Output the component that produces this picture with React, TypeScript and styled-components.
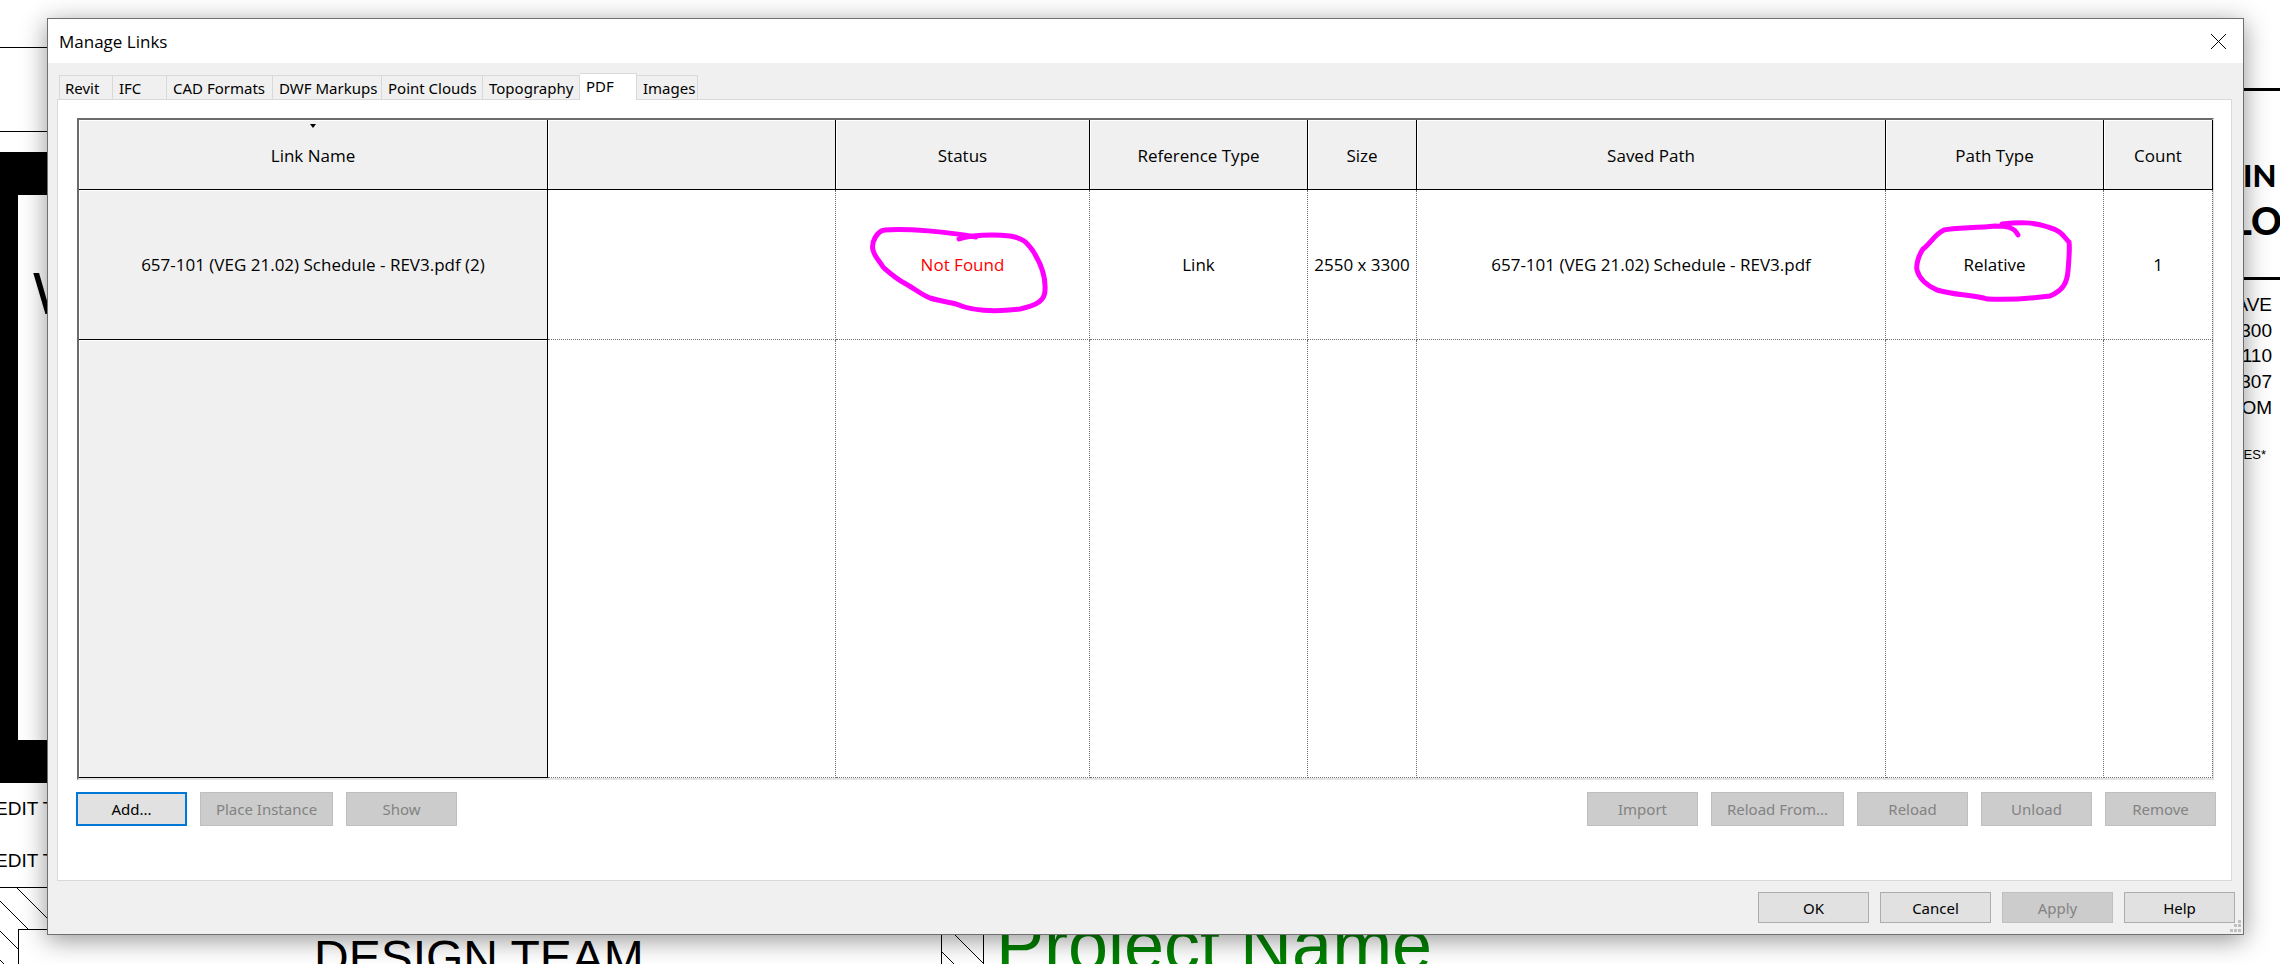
import React from 'react';
import styled, { createGlobalStyle, css } from 'styled-components';

const GlobalStyle = createGlobalStyle`
  * { box-sizing: border-box; }
  body { margin: 0; background: #fff; overflow: hidden; }
`;

const uiFont = '"Open Sans", "Noto Sans", sans-serif';
const controlFont = '"Noto Sans", sans-serif';

const Page = styled.div`
  position: relative;
  display: flex;
  min-height: 100vh;
  padding: 18px 36px 29px 47px;
  overflow: hidden;
`;

const SheetDrawing = styled.svg<{ $side: 'left' | 'right' }>`
  position: absolute;
  top: 0;
  ${(p) => (p.$side === 'left' ? 'left: 0;' : 'right: 0;')}
  font-family: "Liberation Sans", Arial, sans-serif;
`;

const Dialog = styled.main`
  position: relative;
  flex: 1;
  min-width: 0;
  display: flex;
  flex-direction: column;
  background: #f0f0f0;
  border: 1px solid #6f6f6f;
  box-shadow: 0 5px 24px rgba(0, 0, 0, 0.42);
`;

const TitleBar = styled.header`
  display: flex;
  align-items: center;
  justify-content: space-between;
  height: 44px;
  padding: 0 16px 0 11px;
  background: #fff;
`;

const Title = styled.h1`
  margin: 0;
  padding-top: 2px;
  font: 400 17px/24px ${uiFont};
`;

const CloseButton = styled.button`
  display: flex;
  padding: 0;
  border: 0;
  background: none;
`;

const TabList = styled.div`
  display: flex;
  align-items: flex-end;
  height: 36px;
  padding-left: 11px;
`;

const Tab = styled.button<{ $width: number; $active?: boolean }>`
  width: ${(p) => p.$width}px;
  height: 24px;
  padding: 0 0 0 6px;
  border: 1px solid #d9d9d9;
  border-width: 1px 1px 0 0;
  background: #f0f0f0;
  font: 400 15px/24px ${controlFont};
  text-align: left;
  white-space: nowrap;
  color: #000;
  &:first-child { border-left-width: 1px; padding-left: 5px; }
  ${(p) => p.$active && css`
    position: relative;
    height: 27px;
    margin-bottom: -1px;
    padding-bottom: 3px;
    background: #fff;
  `}
`;

const TabPanel = styled.section`
  flex: 1;
  display: flex;
  flex-direction: column;
  margin: 0 11px 0 9px;
  padding: 18px 15px 54px 18px;
  border: 1px solid #d9d9d9;
  background: #fff;
`;

const GridFrame = styled.div`
  flex: 1;
  display: flex;
  margin: 0 2px 0 1px;
  border: 2px solid;
  border-color: #6b6b6b #e3e3e3 #e3e3e3 #6b6b6b;
`;

const LinkTable = styled.table`
  width: 100%;
  table-layout: fixed;
  border-collapse: separate;
  border-spacing: 0;
  font: 400 17px/24px ${uiFont};
`;

const HeaderCell = styled.th`
  position: relative;
  height: 70px;
  padding: 2px 0 0;
  font-weight: 400;
  background: #f0f0f0;
  border-right: 1px solid #000;
  border-bottom: 1px solid #000;
  box-shadow: inset 1px 1px #fff;
`;

const NameCell = styled.th`
  padding: 0;
  font-weight: 400;
  background: #f0f0f0;
  border-right: 1px solid #000;
  border-bottom: 1px solid #000;
  box-shadow: inset 1px 1px #fff;
`;

const Cell = styled.td<{ $missing?: boolean }>`
  padding: 0;
  text-align: center;
  white-space: nowrap;
  color: ${(p) => (p.$missing ? '#ff0000' : '#000')};
  border-right: 1px dotted #6e6e6e;
  border-bottom: 1px dotted #6e6e6e;
`;

const LinkRow = styled.tr`
  height: 150px;
`;

const SortMark = styled.svg`
  position: absolute;
  top: 4px;
  left: calc(50% - 3px);
`;

const Marked = styled.span`
  position: relative;
`;

const InkCircle = styled.svg`
  position: absolute;
  top: 50%;
  left: 50%;
  transform: translate(-50%, -50%);
  overflow: visible;
  pointer-events: none;
`;

const LinkActions = styled.div`
  display: flex;
  flex-wrap: wrap;
  justify-content: space-between;
  margin-top: 12px;
`;

const ButtonGroup = styled.div`
  display: flex;
  gap: 13px;
`;

const Button = styled.button<{ $wide?: boolean; $low?: boolean; $primary?: boolean }>`
  width: ${(p) => (p.$wide ? 133 : 111)}px;
  height: ${(p) => (p.$low ? 31 : 34)}px;
  padding: 0;
  border: ${(p) => (p.$primary ? '2px solid #0078d7' : '1px solid #adadad')};
  background: #e1e1e1;
  font: 400 15px/24px ${controlFont};
  white-space: nowrap;
  color: #000;
  &:disabled {
    border-color: #bfbfbf;
    background: #cccccc;
    color: #838383;
  }
`;

const Footer = styled.footer`
  display: flex;
  justify-content: flex-end;
  gap: 11px;
  padding: 11px 8px 11px 0;
`;

const ResizeGrip = styled.svg`
  position: absolute;
  right: 2px;
  bottom: 2px;
`;

const tabs = [
  { label: 'Revit', width: 54 },
  { label: 'IFC', width: 54 },
  { label: 'CAD Formats', width: 106 },
  { label: 'DWF Markups', width: 109 },
  { label: 'Point Clouds', width: 101 },
  { label: 'Topography', width: 97 },
  { label: 'PDF', width: 57 },
  { label: 'Images', width: 61 },
];

const columns = [
  { label: 'Link Name', width: 469 },
  { label: '', width: 288 },
  { label: 'Status', width: 254 },
  { label: 'Reference Type', width: 218 },
  { label: 'Size', width: 109 },
  { label: 'Saved Path', width: 469 },
  { label: 'Path Type', width: 218 },
  { label: 'Count', width: 109 },
];

function LeftSheet() {
  return (
    <SheetDrawing $side="left" width="1500" height="964" aria-hidden="true">
      <g stroke="#000" strokeWidth="1" fill="none" shapeRendering="crispEdges">
        <path d="M0 47.5H60M0 131.5H60M0 887.5H60M60 929.5H18.5V964" />
        <path d="M17 888l41 41M0 901l28 28M0 931l18 18M0 960l18 18" />
        <path d="M941.5 930V964M983.5 930V964M954 934l29 29M942 952l12 12" />
      </g>
      <path d="M0 152H60V195H18V740H60V783H0Z" />
      <text x="33" y="314" fontSize="60">W</text>
      <g fontSize="19">
        <text x="-5" y="815">EDIT T</text>
        <text x="-5" y="867">EDIT T</text>
      </g>
      <text x="314" y="974" fontSize="48">DESIGN TEAM</text>
      <text x="996" y="970" fontSize="72" fill="#008000">Project Name</text>
    </SheetDrawing>
  );
}

function RightSheet() {
  return (
    <SheetDrawing $side="right" width="60" height="500" aria-hidden="true">
      <path d="M0 88H60V91H0ZM0 277H60V280H0Z" />
      <g fontFamily="Lato, sans-serif" fontWeight="900">
        <text x="23" y="187" fontSize="31">IN</text>
        <text x="12" y="235" fontSize="38">LO</text>
      </g>
      <g fontSize="19" textAnchor="end">
        <text x="52" y="311">AVE</text>
        <text x="52" y="337">300</text>
        <text x="52" y="362">110</text>
        <text x="52" y="388">307</text>
        <text x="52" y="414">OM</text>
        <text x="46" y="459" fontSize="13">ES*</text>
      </g>
    </SheetDrawing>
  );
}

export default function App() {
  return (
    <Page>
      <GlobalStyle />
      <LeftSheet />
      <RightSheet />
      <Dialog>
        <TitleBar>
          <Title>Manage Links</Title>
          <CloseButton aria-label="Close">
            <svg width="17" height="17" stroke="#000" strokeWidth="1" fill="none">
              <path d="M1 1l15 15M16 1L1 16" />
            </svg>
          </CloseButton>
        </TitleBar>
        <TabList role="tablist">
          {tabs.map((t) => (
            <Tab key={t.label} role="tab" $width={t.width} $active={t.label === 'PDF'} aria-selected={t.label === 'PDF'}>
              {t.label}
            </Tab>
          ))}
        </TabList>
        <TabPanel>
          <GridFrame>
            <LinkTable>
              <colgroup>
                {columns.map((c, i) => <col key={i} width={c.width} />)}
              </colgroup>
              <thead>
                <tr>
                  {columns.map((c, i) => (
                    <HeaderCell key={i} scope="col">
                      {c.label}
                      {i === 0 && (
                        <SortMark width="6" height="4"><path d="M0 0H6L3 4Z" /></SortMark>
                      )}
                    </HeaderCell>
                  ))}
                </tr>
              </thead>
              <tbody>
                <LinkRow>
                  <NameCell scope="row">657-101 (VEG 21.02) Schedule - REV3.pdf (2)</NameCell>
                  <Cell />
                  <Cell $missing>
                    <Marked>
                      Not Found
                      <InkCircle width="178" height="100" viewBox="873 214 178 100" fill="none" stroke="#ff00ff" strokeWidth="5" strokeLinecap="round" strokeLinejoin="round">
                        <path d="M976 237C950 232 905 228 885 230C877 231 871 242 873 250C875 258 880 261 883 267C892 275 895 278 906 284C915 289 922 295 930 298C940 301 949 302 956 304C972 311 995 312 1020 309C1038 305 1045 300 1045 290C1046 275 1040 262 1033 251C1026 241 1022 238 1010 236C993 234 971 235 959 239" />
                      </InkCircle>
                    </Marked>
                  </Cell>
                  <Cell>Link</Cell>
                  <Cell>2550 x 3300</Cell>
                  <Cell>657-101 (VEG 21.02) Schedule - REV3.pdf</Cell>
                  <Cell>
                    <Marked>
                      Relative
                      <InkCircle width="156" height="78" viewBox="1916 224 156 78" fill="none" stroke="#ff00ff" strokeWidth="5" strokeLinecap="round" strokeLinejoin="round">
                        <path d="M2018 234C2014 226 2007 225 1995 225C1975 227 1954 227 1944 229C1935 233 1931 242 1923 248C1918 255 1916 265 1917 269C1919 277 1926 284 1937 289C1953 294 1975 294 1987 298C2010 299 2035 297 2050 295C2064 289 2067 281 2068 270C2069 258 2070 247 2069 241C2063 235 2062 230 2048 226C2033 221 2020 221 2002 223" />
                      </InkCircle>
                    </Marked>
                  </Cell>
                  <Cell>1</Cell>
                </LinkRow>
                <tr>
                  <NameCell as="td" />
                  {columns.slice(1).map((_, i) => <Cell key={i} />)}
                </tr>
              </tbody>
            </LinkTable>
          </GridFrame>
          <LinkActions>
            <ButtonGroup>
              <Button $primary>Add...</Button>
              <Button $wide disabled>Place Instance</Button>
              <Button disabled>Show</Button>
            </ButtonGroup>
            <ButtonGroup>
              <Button disabled>Import</Button>
              <Button $wide disabled>Reload From...</Button>
              <Button disabled>Reload</Button>
              <Button disabled>Unload</Button>
              <Button disabled>Remove</Button>
            </ButtonGroup>
          </LinkActions>
        </TabPanel>
        <Footer>
          <Button $low>OK</Button>
          <Button $low>Cancel</Button>
          <Button $low disabled>Apply</Button>
          <Button $low>Help</Button>
        </Footer>
        <ResizeGrip width="12" height="12" fill="#bfbfbf">
          <path d="M9 0h3v3h-3zM5 4h3v3h-3zM9 4h3v3h-3zM1 9h3v3h-3zM5 9h3v3h-3zM9 9h3v3h-3z" />
        </ResizeGrip>
      </Dialog>
    </Page>
  );
}
